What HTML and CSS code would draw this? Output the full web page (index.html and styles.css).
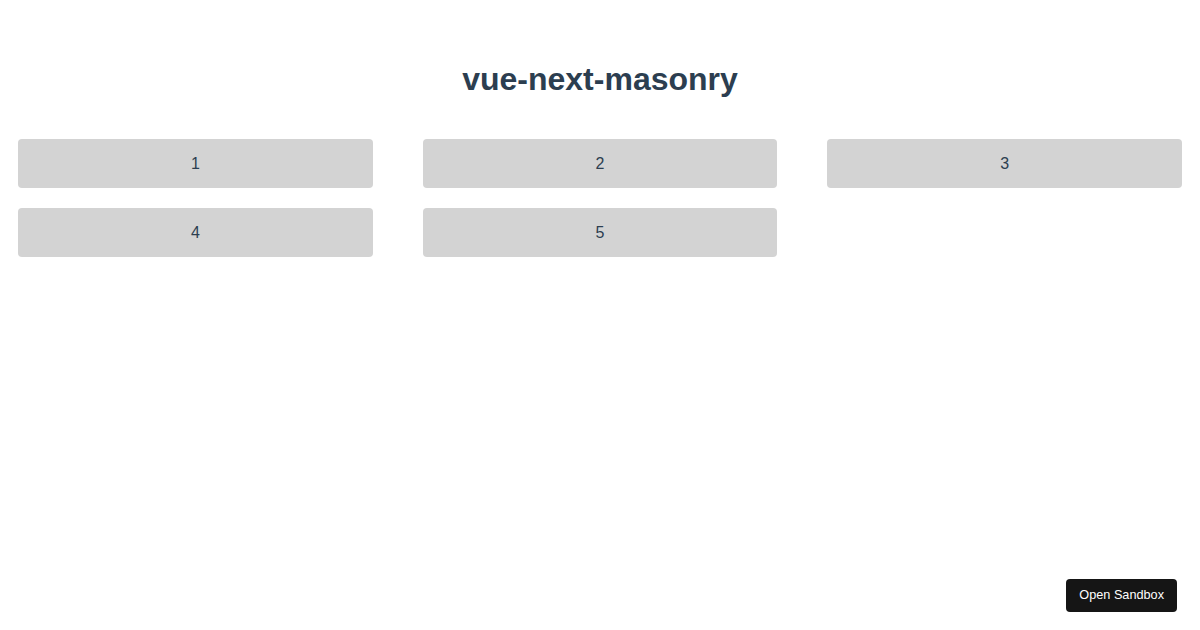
FILE: index.html
```html
<!DOCTYPE html>
<html lang="en">
<head>
<meta charset="utf-8">
<title>vue-next-masonry</title>
<link rel="stylesheet" href="styles.css">
</head>
<body>
<div class="app">
  <h1 class="title">vue-next-masonry</h1>
  <div class="masonry">
    <div class="item">1</div>
    <div class="item">2</div>
    <div class="item">3</div>
    <div class="item">4</div>
    <div class="item">5</div>
  </div>
</div>
<a class="sandbox-btn" href="#">Open Sandbox</a>
</body>
</html>
```

FILE: styles.css
```css
html, body {
  margin: 0;
  padding: 0;
  background: #ffffff;
}
body {
  font-family: "Liberation Sans", Arial, Helvetica, sans-serif;
  color: #2c3e50;
}
.app {
  padding-top: 61px;
  text-align: center;
}
.title {
  margin: 0;
  font-size: 32px;
  font-weight: 700;
  line-height: 37px;
  color: #2c3e50;
}
.masonry {
  margin-top: 41px;
  padding: 0 18px;
  display: grid;
  grid-template-columns: repeat(3, 1fr);
  column-gap: 50px;
  row-gap: 20px;
}
.item {
  background: #d3d3d3;
  border-radius: 4px;
  height: 49px;
  line-height: 49px;
  font-size: 16px;
  color: #2c3e50;
}
.sandbox-btn {
  position: fixed;
  right: 23px;
  bottom: 18px;
  background: #151515;
  color: #ffffff;
  font-family: "Liberation Sans", Arial, sans-serif;
  font-size: 12.7px;
  line-height: 33px;
  height: 33px;
  padding: 0 13px;
  border-radius: 4px;
  text-decoration: none;
}
```
